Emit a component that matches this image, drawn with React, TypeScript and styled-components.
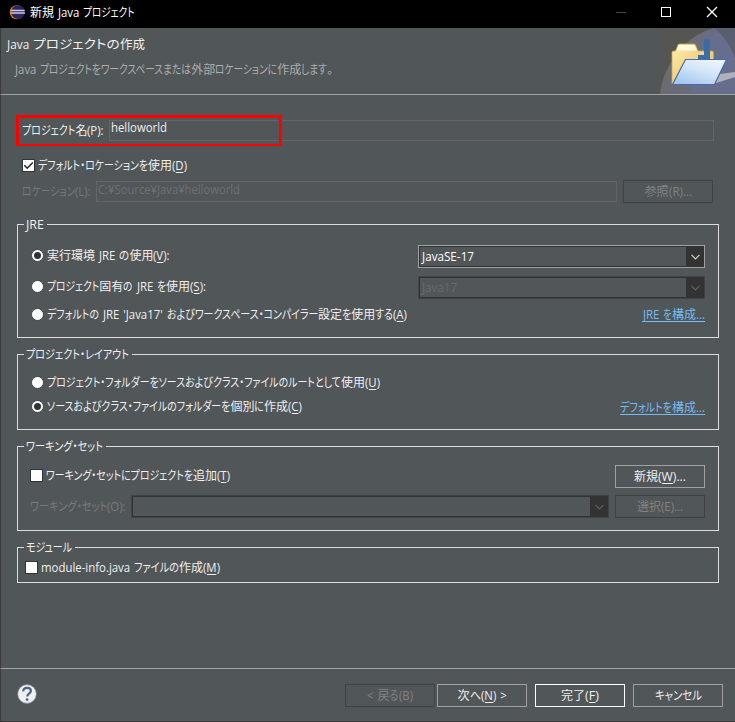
import React, { useLayoutEffect, useRef } from 'react';
import styled, { createGlobalStyle, css } from 'styled-components';

const BG = '#515658';

const GlobalStyle = createGlobalStyle`
  * { box-sizing: border-box; }
  body { margin: 0; background: ${BG}; overflow: hidden; }
`;

/* ---------- text ---------- */

const TextBox = styled.span<{ $w: number; $size?: number; $color?: string }>`
  display: block;
  flex: none;
  width: ${p => p.$w}px;
  height: 18px;
  line-height: 18px;
  white-space: pre;
  word-spacing: 1px;
  font-size: ${p => p.$size ?? 12}px;
  color: ${p => p.$color ?? 'inherit'};
`;

const Run = styled.span`
  display: inline-block;
  transform-origin: 0 50%;
  line-height: 18px;
  vertical-align: baseline;
`;

const Key = styled.span`
  border-bottom: 1px solid currentColor;
  display: inline-block;
  line-height: 12px;
`;

type Kind = 'kana' | 'kanji' | 'latin';

const kindOf = (ch: string): Kind =>
  /[\u3040-\u30ff]/.test(ch) ? 'kana' : /[\u3001-\u303f\u4e00-\u9fff]/.test(ch) ? 'kanji' : 'latin';

function splitRuns(text: string) {
  const runs: { kind: Kind; text: string }[] = [];
  for (const ch of text) {
    const kind = kindOf(ch);
    const last = runs[runs.length - 1];
    if (last && last.kind === kind) last.text += ch;
    else runs.push({ kind, text: ch });
  }
  return runs;
}

function withKey(text: string) {
  const m = text.match(/^(.*)_(\w)(.*)$/);
  if (!m) return text;
  return (
    <>
      {m[1]}
      <Key>{m[2]}</Key>
      {m[3]}
    </>
  );
}

const LATIN_RATIO = 0.95;

/* Condenses kana so that a caption fills exactly the given width; "_" marks the access key. */
function Text({ w, size, color, children }: { w: number; size?: number; color?: string; children: string }) {
  const ref = useRef<HTMLSpanElement>(null);
  useLayoutEffect(() => {
    const fit = () => {
      const els = Array.from(ref.current!.children) as HTMLElement[];
      const sum = { kana: 0, kanji: 0, latin: 0 };
      const widths = els.map(el => {
        el.style.transform = '';
        el.style.marginRight = '';
        const width = el.getBoundingClientRect().width;
        sum[el.dataset.kind as Kind] += width;
        return width;
      });
      const ratio = { kana: 1, kanji: 1, latin: LATIN_RATIO };
      if (sum.kana > 0) ratio.kana = (w - sum.kanji - sum.latin * LATIN_RATIO) / sum.kana;
      else ratio.latin = (w - sum.kanji) / sum.latin;
      els.forEach((el, i) => {
        const r = ratio[el.dataset.kind as Kind];
        el.style.transform = `scaleX(${r})`;
        el.style.marginRight = `${widths[i] * (r - 1)}px`;
      });
    };
    fit();
    document.fonts.ready.then(() => ref.current && fit());
  }, [w, children]);
  return (
    <TextBox ref={ref} $w={w} $size={size} $color={color}>
      {splitRuns(children).map((r, i) => (
        <Run key={i} data-kind={r.kind}>
          {withKey(r.text)}
        </Run>
      ))}
    </TextBox>
  );
}

/* ---------- window ---------- */

const Window = styled.div`
  width: 735px;
  height: 722px;
  display: flex;
  flex-direction: column;
  background: ${BG};
  color: #f0f0f0;
  font-family: 'Open Sans', 'Noto Sans CJK JP', sans-serif;
  font-feature-settings: 'palt';
  border-bottom: 1px solid #3b3739;
`;

const TitleBar = styled.header`
  height: 28px;
  flex: none;
  display: flex;
  align-items: flex-start;
  padding: 4px 17px 0 9px;
  background: #000;
  color: #fff;
`;

const TitleText = styled.div`
  flex: 1;
  margin-left: 4px;
`;

const Controls = styled.svg`
  margin-top: 2px;
`;

const Banner = styled.div`
  height: 67px;
  flex: none;
  display: flex;
  justify-content: space-between;
  border-left: 1px solid #3c3c3c;
  border-bottom: 1px solid #a0a0a0;
`;

const BannerText = styled.div`
  padding: 8px 0 0 6px;
`;

const BannerNote = styled.div`
  margin: 7px 0 0 8px;
`;

const Body = styled.main`
  height: 574px;
  flex: none;
  border-left: 1px solid #3c3c3c;
  border-bottom: 1px solid #a0a0a0;
  padding: 20px 16px 0 16px;
`;

const Row = styled.div<{ $h: number; $top?: number; $left?: number; $right?: number }>`
  display: flex;
  align-items: center;
  height: ${p => p.$h}px;
  margin-top: ${p => p.$top ?? 0}px;
  padding-left: ${p => p.$left ?? 0}px;
  padding-right: ${p => p.$right ?? 0}px;
`;

const NameRow = styled(Row)`
  position: relative;
`;

const Highlight = styled.div`
  position: absolute;
  left: -1px;
  top: 0;
  width: 266px;
  height: 31px;
  border: 3px solid #fe0000;
  border-bottom-width: 2px;
`;

const Spacer = styled.div`
  flex: 1;
`;

const Input = styled.div<{ $w: number; $ml: number; $raise?: number }>`
  width: ${p => p.$w}px;
  height: 21px;
  margin-left: ${p => p.$ml}px;
  padding-left: 1px;
  border: 1px solid #666464;
  display: flex;
  align-items: flex-start;
  & > span {
    margin-top: -${p => p.$raise ?? 0}px;
  }
`;

const Button = styled.div<{ $tone?: 'disabled' | 'default'; $ml?: number }>`
  width: 90px;
  height: 23px;
  flex: none;
  margin-left: ${p => p.$ml ?? 0}px;
  display: flex;
  align-items: center;
  justify-content: center;
  border: 1px solid #a0a0a0;
  ${p => p.$tone === 'default' && css`border-color: #fff;`}
  ${p => p.$tone === 'disabled' && css`border-color: #404243; color: #808384;`}
`;

const Group = styled.section<{ $h: number; $top: number }>`
  width: 702px;
  height: ${p => p.$h}px;
  margin-top: ${p => p.$top}px;
  border: 1px solid #dcdcdc;
`;

const Legend = styled.div`
  width: max-content;
  height: 18px;
  margin: -9px 0 0 6px;
  padding: 0 3px 0 2px;
  background: ${BG};
`;

const Option = styled.div<{ $gap: number; $raised?: boolean }>`
  display: flex;
  align-items: center;
  gap: ${p => p.$gap}px;
  padding-bottom: ${p => (p.$raised ? 2 : 0)}px;
`;

const Radio = styled.span<{ $on?: boolean }>`
  width: 13px;
  height: 13px;
  border-radius: 50%;
  background: #fff;
  border: 1px solid #414547;
  display: flex;
  align-items: center;
  justify-content: center;
  &::after {
    content: '';
    display: ${p => (p.$on ? 'block' : 'none')};
    width: 7px;
    height: 7px;
    border-radius: 50%;
    background: #333;
    flex: none;
  }
`;

const Check = styled.span`
  width: 13px;
  height: 13px;
  background: #fff;
  border: 1px solid #333;
  display: flex;
`;

const Combo = styled.div<{ $w: number; $off?: boolean }>`
  width: ${p => p.$w}px;
  height: 23px;
  flex: none;
  display: flex;
  border: 1px solid ${p => (p.$off ? '#404243' : '#a0a0a0')};
  color: ${p => (p.$off ? '#686b6d' : '#fff')};
`;

const ComboValue = styled.div`
  flex: 1;
  border: 1px solid #333;
  border-right: 0;
  padding: 1px 0 0 2px;
`;

const ComboArrow = styled.div<{ $off?: boolean }>`
  width: 18px;
  background: #333;
  color: ${p => (p.$off ? '#606060' : '#d0d0d0')};
  display: flex;
  align-items: center;
  justify-content: center;
`;

const Link = styled.a<{ $drop?: number }>`
  color: #73bdf2;
  height: 15px;
  display: block;
  margin-top: ${p => p.$drop ?? 0}px;
  border-bottom: 1px solid #73bdf2;
`;

const LinkText = styled.div`
  margin-top: -1px;
`;

const Footer = styled.footer`
  flex: 1;
  display: flex;
  align-items: flex-start;
  padding: 15px 12px 0 16px;
  border-left: 1px solid #3c3c3c;
`;

/* ---------- drawings ---------- */

const Chevron = () => (
  <svg width="9" height="6" viewBox="0 0 9 6" fill="none" stroke="currentColor" strokeWidth="1.2">
    <path d="M0.5 0.8 4.5 4.8 8.5 0.8" />
  </svg>
);

const Tick = () => (
  <svg width="11" height="11" viewBox="0 0 11 11" fill="none" stroke="#222" strokeWidth="1.5">
    <path d="M1.3 5.3 4.2 8.2 9.8 2.4" />
  </svg>
);

const EclipseIcon = () => (
  <svg width="17" height="17" viewBox="0 0 17 17">
    <circle cx="7.8" cy="8.2" r="7" fill="#f08a1c" />
    <circle cx="9" cy="8.2" r="6.9" fill="#2f2363" />
    <path d="M2.300 6.500H15.700M2.100 9H15.900" stroke="#cfcce0" strokeWidth="1.3" />
  </svg>
);

const WindowControls = () => (
  <Controls width="103" height="14" viewBox="0 0 103 14" fill="none">
    <path d="M1 6.5H11" stroke="#444" />
    <rect x="46.5" y="1.5" width="9" height="9" stroke="#fff" />
    <path d="M92 1 102 11M102 1 92 11" stroke="#fff" strokeWidth="1.3" />
  </Controls>
);

const BannerArt = () => (
  <svg width="75" height="66" viewBox="0 0 75 66">
    <defs>
      <linearGradient id="haze" x1="0" y1="0" x2="1" y2="0">
        <stop offset="0" stopColor="#6b6c70" />
        <stop offset="1" stopColor="#666d88" />
      </linearGradient>
      <linearGradient id="back" x1="0" y1="0" x2="1" y2="1">
        <stop offset="0" stopColor="#fbeeb4" />
        <stop offset="1" stopColor="#e9b94e" />
      </linearGradient>
      <linearGradient id="front" x1="0.1" y1="1" x2="0.7" y2="0">
        <stop offset="0" stopColor="#9cc4ef" />
        <stop offset="0.6" stopColor="#d3e5f8" />
        <stop offset="1" stopColor="#eaf3fd" />
      </linearGradient>
    </defs>
    <rect width="75" height="66" fill="#555554" />
    <path d="M0 66C3 38 24 8 54 0H75V66Z" fill="url(#haze)" />
    <path d="M31 66C30 36 42 14 62 0H75V66Z" fill="#667092" opacity="0.6" />
    <path d="M54 0C63 7 70 17 75 30V0Z" fill="#5a5f70" />
    <path d="M60 46 75 44V49L50 57Z" fill="#aeb1b9" />
    <path d="M12 56V24.500Q12 23 13.500 23H15.500L18 17Q18.400 16 19.500 16H34Q35 16 35.500 17L38 23H52Q53.500 23 53.500 24.500V50Z" fill="url(#back)" stroke="#d3a544" strokeWidth="0.8" />
    <path d="M18.500 17H34.500L37 22.500H16.500Z" fill="#fffbdc" />
    <path d="M44 11.500H50V33H38V27H44Z" fill="#3a6ca6" />
    <path d="M25.500 31.500H66.500L54.500 56.500H12.500Z" fill="url(#front)" stroke="#4b67b5" strokeWidth="1.2" strokeLinejoin="round" />
  </svg>
);

const HelpIcon = () => (
  <svg width="20" height="20" viewBox="0 0 20 20">
    <circle cx="10" cy="10" r="9.400" fill="#efeff1" stroke="#6d8198" strokeWidth="0.8" />
    <path d="M6.200 7.400C6.300 4.900 8 3.900 10.100 3.900C12.500 3.900 13.900 5.200 13.900 7C13.900 9.500 10.200 9.300 10.200 12.600" fill="none" stroke="#4c6482" strokeWidth="2.200" />
    <circle cx="10.100" cy="15.600" r="1.400" fill="#4c6482" />
  </svg>
);

/* ---------- page ---------- */

const DIM = '#777a7c';

export default function App() {
  return (
    <>
      <GlobalStyle />
      <Window>
        <TitleBar>
          <EclipseIcon />
          <TitleText>
            <Text w={105} color="#fff">新規 Java プロジェクト</Text>
          </TitleText>
          <WindowControls />
        </TitleBar>

        <Banner>
          <BannerText>
            <Text w={138} size={12.5}>Java プロジェクトの作成</Text>
            <BannerNote>
              <Text w={318} color="#acaeaf">Java プロジェクトをワークスペースまたは外部ロケーションに作成します。</Text>
            </BannerNote>
          </BannerText>
          <BannerArt />
        </Banner>

        <Body>
          <NameRow $h={31} $left={5}>
            <Text w={82}>プロジェクト名(P):</Text>
            <Input $w={605} $ml={5} $raise={2}>
              <Text w={56}>helloworld</Text>
            </Input>
            <Highlight />
          </NameRow>

          <Row $h={17} $top={11} $left={5}>
            <Option $gap={3}>
              <Check><Tick /></Check>
              <Text w={149}>デフォルト・ロケーションを使用(_D)</Text>
            </Option>
          </Row>

          <Row $h={23} $top={6} $left={5}>
            <Text w={69} color={DIM}>ロケーション(L):</Text>
            <Input $w={521} $ml={5} $raise={1}>
              <Text w={142} color="#6e7173">C:¥Source¥Java¥helloworld</Text>
            </Input>
            <Button $tone="disabled" $ml={6}>
              <Text w={47}>参照(R)...</Text>
            </Button>
          </Row>

          <Group $h={114} $top={21}>
            <Legend><Text w={18}>JRE</Text></Legend>
            <Row $h={23} $top={11} $left={13} $right={13}>
              <Option $gap={3} $raised><Radio $on /><Text w={123}>実行環境 JRE の使用(_V):</Text></Option>
              <Spacer />
              <Combo $w={287}>
                <ComboValue><Text w={52}>JavaSE-17</Text></ComboValue>
                <ComboArrow><Chevron /></ComboArrow>
              </Combo>
            </Row>
            <Row $h={23} $top={8} $left={13} $right={13}>
              <Option $gap={3} $raised><Radio /><Text w={159}>プロジェクト固有の JRE を使用(_S):</Text></Option>
              <Spacer />
              <Combo $w={287} $off>
                <ComboValue><Text w={35}>Java17</Text></ComboValue>
                <ComboArrow $off><Chevron /></ComboArrow>
              </Combo>
            </Row>
            <Row $h={17} $top={7} $left={13} $right={13}>
              <Option $gap={3}><Radio /><Text w={360}>デフォルトの JRE 'Java17' およびワークスペース・コンパイラー設定を使用する(_A)</Text></Option>
              <Spacer />
              <Link><LinkText><Text w={62}>JRE を構成...</Text></LinkText></Link>
            </Row>
          </Group>

          <Group $h={76} $top={16}>
            <Legend><Text w={103}>プロジェクト・レイアウト</Text></Legend>
            <Row $h={17} $top={10} $left={13}>
              <Option $gap={3}><Radio /><Text w={333}>プロジェクト・フォルダーをソースおよびクラス・ファイルのルートとして使用(_U)</Text></Option>
            </Row>
            <Row $h={17} $top={7} $left={13} $right={13}>
              <Option $gap={3}><Radio $on /><Text w={255}>ソースおよびクラス・ファイルのフォルダーを個別に作成(_C)</Text></Option>
              <Spacer />
              <Link $drop={2}><LinkText><Text w={85}>デフォルトを構成...</Text></LinkText></Link>
            </Row>
          </Group>

          <Group $h={85} $top={16}>
            <Legend><Text w={77}>ワーキング・セット</Text></Legend>
            <Row $h={23} $top={9} $left={12} $right={13}>
              <Option $gap={3} $raised><Check /><Text w={184}>ワーキング・セットにプロジェクトを追加(_T)</Text></Option>
              <Spacer />
              <Button><Text w={52}>新規(_W)...</Text></Button>
            </Row>
            <Row $h={23} $top={7} $left={12} $right={13}>
              <Text w={96} color={DIM}>ワーキング・セット(O):</Text>
              <Spacer />
              <Combo $w={478} $off>
                <ComboValue />
                <ComboArrow $off><Chevron /></ComboArrow>
              </Combo>
              <Button $tone="disabled" $ml={6}><Text w={46}>選択(E)...</Text></Button>
            </Row>
          </Group>

          <Group $h={36} $top={16}>
            <Legend><Text w={46}>モジュール</Text></Legend>
            <Row $h={17} $top={2} $left={7}>
              <Option $gap={3}><Check /><Text w={179}>module-info.java ファイルの作成(_M)</Text></Option>
            </Row>
          </Group>
        </Body>

        <Footer>
          <HelpIcon />
          <Spacer />
          <Button $tone="disabled"><Text w={46}>&lt; 戻る(B)</Text></Button>
          <Button $ml={2}><Text w={49}>次へ(_N) &gt;</Text></Button>
          <Button $tone="default" $ml={8}><Text w={38}>完了(_F)</Text></Button>
          <Button $ml={8}><Text w={47}>キャンセル</Text></Button>
        </Footer>
      </Window>
    </>
  );
}
